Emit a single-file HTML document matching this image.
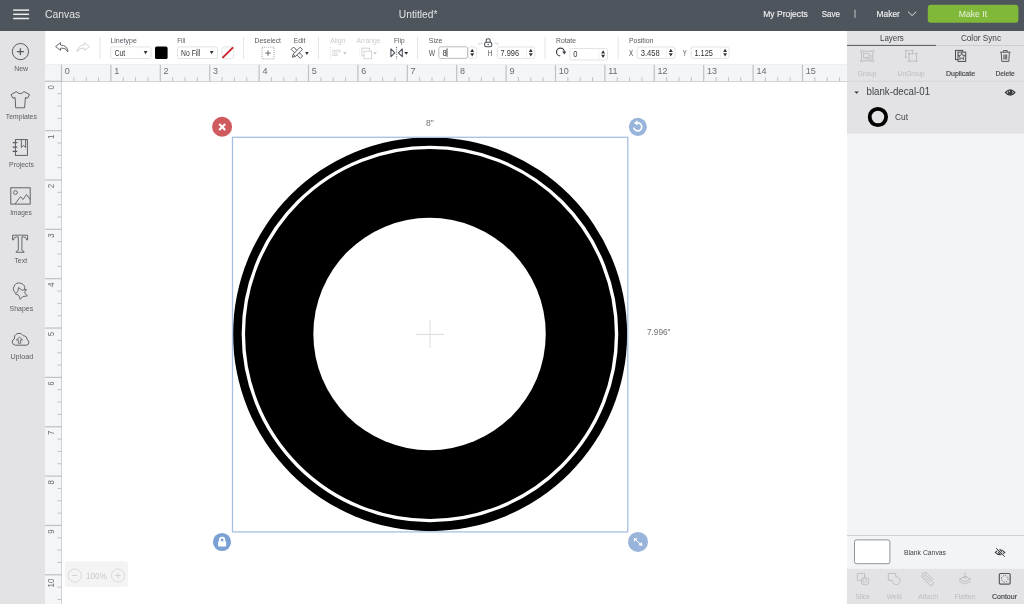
<!DOCTYPE html><html><head><meta charset="utf-8"><style>html,body{margin:0;padding:0;width:1024px;height:604px;overflow:hidden;background:#fff}svg{display:block;will-change:transform}text{font-family:"Liberation Sans", sans-serif}</style></head><body><svg width="1024" height="604" viewBox="0 0 1024 604"><rect x="0" y="0" width="1024" height="604" fill="#ffffff"/>
<rect x="0" y="0" width="1024" height="31" fill="#4f555c"/>
<rect x="0" y="31" width="45.3" height="574" fill="#e3e3e5"/>
<rect x="13.2" y="9.35" width="15.9" height="1.5" fill="#eceded"/>
<rect x="13.2" y="13.55" width="15.9" height="1.5" fill="#eceded"/>
<rect x="13.2" y="17.75" width="15.9" height="1.5" fill="#eceded"/>
<text x="45" y="18.2" font-size="11.4" fill="#e4e5e6" textLength="35.2" lengthAdjust="spacingAndGlyphs">Canvas</text>
<text x="398.8" y="17.8" font-size="11" fill="#e4e5e6" textLength="38.7" lengthAdjust="spacingAndGlyphs">Untitled*</text>
<text x="763.2" y="16.6" font-size="9" fill="#f0f0f0" stroke="#f0f0f0" stroke-width="0.14" textLength="44.6" lengthAdjust="spacingAndGlyphs">My Projects</text>
<text x="821.7" y="16.6" font-size="9" fill="#f0f0f0" stroke="#f0f0f0" stroke-width="0.14" textLength="18.4" lengthAdjust="spacingAndGlyphs">Save</text>
<rect x="854.3" y="9.7" width="1.4" height="8.2" fill="#a3a6aa"/>
<text x="876.6" y="16.6" font-size="9" fill="#f0f0f0" stroke="#f0f0f0" stroke-width="0.14" textLength="23.3" lengthAdjust="spacingAndGlyphs">Maker</text>
<polyline points="908,11.6 912.1,15.6 916.2,11.6" fill="none" stroke="#e0e1e2" stroke-width="1"/>
<rect x="927.8" y="4.8" width="90.6" height="18" rx="3" fill="#80b83a"/>
<text x="958.7" y="16.7" font-size="9" fill="#eaf3df" textLength="28.5" lengthAdjust="spacingAndGlyphs">Make It</text>
<circle cx="20.45" cy="51.6" r="8.1" fill="none" stroke="#575c62" stroke-width="1"/>
<path d="M16.9,51.7 H23.9 M20.4,48.3 V55.1" stroke="#575c62" stroke-width="1.3"/>
<text x="14.2" y="70.6" font-size="8.0" fill="#575c62" textLength="13.9" lengthAdjust="spacingAndGlyphs">New</text>
<path d="M16.3,91.6 Q18.4,93.7 20.3,93.6 Q22.3,93.7 24,91.6 L29.5,94.6 L27.5,98.2 L25.4,97.5 L24.6,107.8 L15.7,107.8 L15.1,97.5 L12.9,98.2 L11.1,94.6 Z" fill="none" stroke="#575c62" stroke-width="0.95" stroke-linejoin="round"/>
<text x="5.8" y="118.6" font-size="8.0" fill="#575c62" textLength="31" lengthAdjust="spacingAndGlyphs">Templates</text>
<rect x="15.4" y="139.6" width="12" height="15.8" fill="none" stroke="#575c62" stroke-width="0.95"/>
<path d="M21.4,139.6 V147.6 L23.5,145.3 L25.6,147.6 V139.6" fill="none" stroke="#575c62" stroke-width="0.9"/>
<path d="M12.7,142.7 H17.3 M12.7,147.1 H17.3 M12.7,151.3 H17.3" stroke="#575c62" stroke-width="1.2"/>
<text x="9.1" y="166.9" font-size="8.0" fill="#575c62" textLength="24.8" lengthAdjust="spacingAndGlyphs">Projects</text>
<rect x="10.8" y="187.8" width="19.4" height="16.3" fill="none" stroke="#575c62" stroke-width="0.95"/>
<circle cx="15.5" cy="192.6" r="1.9" fill="none" stroke="#575c62" stroke-width="0.9"/>
<polyline points="15,204 20.5,196.5 23,199.5 26.5,194.5 30.2,199.5" fill="none" stroke="#575c62" stroke-width="0.9"/>
<text x="10.3" y="215" font-size="8.0" fill="#575c62" textLength="21.5" lengthAdjust="spacingAndGlyphs">Images</text>
<path d="M12.6,235.2 H27.6 V240 H26.8 Q26.3,236.9 23.6,236.9 H21.9 V250 Q21.9,251.3 24,251.3 V252.3 H16.2 V251.3 Q18.3,251.3 18.3,250 V236.9 H16.6 Q13.9,236.9 13.4,240 H12.6 Z" fill="none" stroke="#575c62" stroke-width="0.9" stroke-linejoin="round"/>
<text x="14.3" y="263" font-size="8.0" fill="#575c62" textLength="12.8" lengthAdjust="spacingAndGlyphs">Text</text>
<path d="M15.9,293.2 A5.6,5.6 0 1 1 24.6,289.8" fill="none" stroke="#575c62" stroke-width="0.9"/>
<path d="M18.5,287.5 L21.9,290.2 L26.3,289.5 L24.5,292.8 L27.4,295.9 L22.8,296.6 L20.3,299.4 L18.8,295.3 L15.4,293.9 L17.9,291.2 Z" fill="none" stroke="#575c62" stroke-width="0.9" stroke-linejoin="round"/>
<text x="9.6" y="311" font-size="8.0" fill="#575c62" textLength="23.6" lengthAdjust="spacingAndGlyphs">Shapes</text>
<path d="M15.3,345.2 A3.3,3.3 0 0 1 14.5,338.8 A4.7,4.7 0 0 1 23.3,335.8 A3.4,3.4 0 0 1 27,339.6 A2.9,2.9 0 0 1 26.4,345.2 Z" fill="none" stroke="#575c62" stroke-width="0.95" stroke-linejoin="round"/>
<path d="M19.5,337.2 L16.4,339.9 H18.3 V343.2 H20.7 V339.9 H22.6 Z" fill="none" stroke="#575c62" stroke-width="0.85" stroke-linejoin="round"/>
<text x="10.4" y="359" font-size="8.0" fill="#575c62" textLength="22.8" lengthAdjust="spacingAndGlyphs">Upload</text>
<rect x="99.5" y="37" width="1" height="22" fill="#e6e6e6"/>
<rect x="243.0" y="37" width="1" height="22" fill="#e6e6e6"/>
<rect x="318.0" y="37" width="1" height="22" fill="#e6e6e6"/>
<rect x="417.0" y="37" width="1" height="22" fill="#e6e6e6"/>
<rect x="544.5" y="37" width="1" height="22" fill="#e6e6e6"/>
<rect x="617.7" y="37" width="1" height="22" fill="#e6e6e6"/>
<path d="M60.5,42.6 L55.6,46.6 L60.5,50.4 V48.2 Q65.8,47.6 67.9,52 Q67.6,45.3 60.5,45 Z" fill="none" stroke="#5a5f65" stroke-width="0.95" stroke-linejoin="round"/>
<path d="M84.5,42.6 L89.4,46.6 L84.5,50.4 V48.2 Q79.2,47.6 77.1,52 Q77.4,45.3 84.5,45 Z" fill="none" stroke="#d0d2d4" stroke-width="0.95" stroke-linejoin="round"/>
<text x="110.4" y="42.7" font-size="7.9" fill="#555a60" textLength="26.4" lengthAdjust="spacingAndGlyphs">Linetype</text>
<text x="177.2" y="42.7" font-size="7.9" fill="#555a60" textLength="8" lengthAdjust="spacingAndGlyphs">Fill</text>
<text x="254.6" y="42.7" font-size="7.9" fill="#555a60" textLength="26.4" lengthAdjust="spacingAndGlyphs">Deselect</text>
<text x="293.7" y="42.7" font-size="7.9" fill="#555a60" textLength="11.7" lengthAdjust="spacingAndGlyphs">Edit</text>
<text x="330.2" y="42.7" font-size="7.9" fill="#c9cbcd" textLength="15.3" lengthAdjust="spacingAndGlyphs">Align</text>
<text x="356.6" y="42.7" font-size="7.9" fill="#c9cbcd" textLength="24" lengthAdjust="spacingAndGlyphs">Arrange</text>
<text x="394" y="42.7" font-size="7.9" fill="#555a60" textLength="10.6" lengthAdjust="spacingAndGlyphs">Flip</text>
<text x="428.8" y="42.7" font-size="7.9" fill="#555a60" textLength="13.7" lengthAdjust="spacingAndGlyphs">Size</text>
<text x="556" y="42.7" font-size="7.9" fill="#555a60" textLength="20" lengthAdjust="spacingAndGlyphs">Rotate</text>
<text x="629" y="42.7" font-size="7.9" fill="#555a60" textLength="24.4" lengthAdjust="spacingAndGlyphs">Position</text>
<rect x="110.7" y="46.9" width="40.4" height="11.6" rx="2" fill="#fff" stroke="#e3e3e3" stroke-width="1"/>
<text x="114.7" y="55.7" font-size="8.2" fill="#333" textLength="10.4" lengthAdjust="spacingAndGlyphs">Cut</text>
<path d="M143.7,50.95 H147.5 L145.6,54.25 Z" fill="#333"/>
<rect x="155" y="46.6" width="12.6" height="12.4" rx="1.6" fill="#000"/>
<rect x="177.5" y="46.9" width="40" height="11.6" rx="2" fill="#fff" stroke="#e3e3e3" stroke-width="1"/>
<text x="181.1" y="55.7" font-size="8.2" fill="#333" textLength="19.2" lengthAdjust="spacingAndGlyphs">No Fill</text>
<path d="M209.79999999999998,50.95 H213.6 L211.7,54.25 Z" fill="#333"/>
<rect x="222.1" y="46.9" width="11.6" height="11.8" rx="2" fill="#fff" stroke="#e3e3e3" stroke-width="1"/>
<line x1="223" y1="57.4" x2="232.6" y2="47.8" stroke="#c9232b" stroke-width="1.9" stroke-linecap="round"/>
<rect x="262" y="47.2" width="12" height="11.8" fill="none" stroke="#8a8e92" stroke-width="0.8" stroke-dasharray="1,1.1"/>
<path d="M265.3,53.1 H270.7 M268,50.4 V55.8" stroke="#555" stroke-width="0.85"/>
<g transform="translate(296.9,52.7) rotate(45) scale(0.84)"><rect x="-7.6" y="-2" width="15.2" height="4" fill="#fff" stroke="#50555b" stroke-width="1.05"/><path d="M-4,-2 V-0.6 M-1.5,-2 V-0.6 M1,-2 V-0.6 M3.5,-2 V-0.6" stroke="#50555b" stroke-width="0.7"/></g>
<g transform="translate(296.9,52.7) rotate(-45) scale(0.84)"><path d="M-7.6,0 L-4.4,-1.9 H7.4 V1.9 H-4.4 Z M-4.4,-1.9 V1.9" fill="#fff" stroke="#50555b" stroke-width="1.05" stroke-linejoin="round"/></g>
<path d="M305.09999999999997,51.9 H308.7 L306.9,54.9 Z" fill="#333"/>
<path d="M330.4,47 V59" stroke="#c9cbcd" stroke-width="0.8" stroke-dasharray="0.9,1.6"/>
<rect x="332.3" y="50.2" width="8.4" height="1.7" rx="0.8" fill="none" stroke="#cfd1d3" stroke-width="0.8"/><rect x="332.3" y="53.8" width="5.4" height="1.7" rx="0.8" fill="none" stroke="#cfd1d3" stroke-width="0.8"/>
<path d="M343.0,51.949999999999996 H346.79999999999995 L344.9,54.65 Z" fill="#c9cbcd"/>
<path d="M359.6,56.5 V49.5 Q359.6,47 362,47 H367" fill="none" stroke="#dfe0e2" stroke-width="0.7" stroke-dasharray="0.9,1"/>
<rect x="361.9" y="48.2" width="7.8" height="7.6" fill="#fff" stroke="#cfd1d3" stroke-width="0.9"/><rect x="364.1" y="51.2" width="7.5" height="7.5" fill="#fff" stroke="#cfd1d3" stroke-width="0.9"/>
<path d="M373.1,51.949999999999996 H376.9 L375,54.65 Z" fill="#c9cbcd"/>
<path d="M390.9,48.9 V56.7 L394.8,52.8 Z M402.3,48.9 V56.7 L398.4,52.8 Z" fill="none" stroke="#4a4f55" stroke-width="1.05" stroke-linejoin="round"/>
<path d="M396.6,47 V59.2" stroke="#4a4f55" stroke-width="0.9" stroke-dasharray="1,1.3"/>
<path d="M404.25,51.9 H408.15 L406.2,54.699999999999996 Z" fill="#333"/>
<text x="428.8" y="55.7" font-size="8.2" fill="#555a60" textLength="6.4" lengthAdjust="spacingAndGlyphs">W</text>
<rect x="468.1" y="47.0" width="8.6" height="11.4" rx="2" fill="#fff" stroke="#e6e6e6" stroke-width="1"/>
<rect x="438.8" y="46.8" width="28.8" height="11.6" rx="2" fill="#fff" stroke="#b9bcbf" stroke-width="1"/>
<text x="442.5" y="55.7" font-size="8.2" fill="#333" textLength="4.2" lengthAdjust="spacingAndGlyphs">8</text>
<rect x="446.6" y="48.4" width="0.8" height="8.4" fill="#222"/>
<path d="M470.25,51.900000000000006 L472.2,48.800000000000004 L474.15,51.900000000000006 Z M470.25,53.300000000000004 L472.2,56.6 L474.15,53.300000000000004 Z" fill="#333"/>
<path d="M478.6,45.5 V43.3 H482.5 M494.4,43.3 H497.8 V45.5" fill="none" stroke="#d3d5d7" stroke-width="0.9"/>
<rect x="484.6" y="42.2" width="7.2" height="4.6" rx="1.8" fill="none" stroke="#4a4f55" stroke-width="1.05"/>
<path d="M486.2,42.4 V40.6 Q486.2,38.7 488.2,38.7 Q490.2,38.7 490.2,40.6 V42.4" fill="none" stroke="#4a4f55" stroke-width="1.05"/>
<circle cx="488.2" cy="44.4" r="0.75" fill="#4a4f55"/>
<text x="487.8" y="55.7" font-size="8.2" fill="#555a60" textLength="4.8" lengthAdjust="spacingAndGlyphs">H</text>
<rect x="497.4" y="47.0" width="37.4" height="11.4" rx="2" fill="#fff" stroke="#e3e3e3" stroke-width="1"/>
<rect x="526.2" y="47" width="0.8" height="11.5" fill="#eeeeee"/>
<text x="500.5" y="55.7" font-size="8.2" fill="#333" textLength="18.5" lengthAdjust="spacingAndGlyphs">7.996</text>
<path d="M528.8499999999999,51.900000000000006 L530.8,48.800000000000004 L532.75,51.900000000000006 Z M528.8499999999999,53.300000000000004 L530.8,56.6 L532.75,53.300000000000004 Z" fill="#333"/>
<path d="M560.2,55.9 A3.9,3.9 0 1 1 564.3,52" fill="none" stroke="#3e4349" stroke-width="1.2"/>
<path d="M562.2,51.6 L566.4,51.6 L564.3,54.4 Z" fill="#3e4349"/>
<rect x="569.8" y="48.5" width="37.7" height="11.5" rx="2" fill="#fff" stroke="#e3e3e3" stroke-width="1"/>
<rect x="598.5" y="48.5" width="0.8" height="11.5" fill="#eeeeee"/>
<text x="573.3" y="57.1" font-size="8.2" fill="#333" textLength="4.2" lengthAdjust="spacingAndGlyphs">0</text>
<path d="M601.15,53.400000000000006 L603.1,50.300000000000004 L605.0500000000001,53.400000000000006 Z M601.15,54.800000000000004 L603.1,58.1 L605.0500000000001,54.800000000000004 Z" fill="#333"/>
<text x="629" y="55.7" font-size="8.2" fill="#555a60" textLength="4.2" lengthAdjust="spacingAndGlyphs">X</text>
<rect x="637.2" y="47.0" width="37.9" height="11.4" rx="2" fill="#fff" stroke="#e3e3e3" stroke-width="1"/>
<rect x="666" y="47" width="0.8" height="11.5" fill="#eeeeee"/>
<text x="640.7" y="55.7" font-size="8.2" fill="#333" textLength="19.1" lengthAdjust="spacingAndGlyphs">3.458</text>
<path d="M668.8499999999999,51.900000000000006 L670.8,48.800000000000004 L672.75,51.900000000000006 Z M668.8499999999999,53.300000000000004 L670.8,56.6 L672.75,53.300000000000004 Z" fill="#333"/>
<text x="682.7" y="55.7" font-size="8.2" fill="#555a60" textLength="4" lengthAdjust="spacingAndGlyphs">Y</text>
<rect x="691.1" y="47.0" width="38" height="11.4" rx="2" fill="#fff" stroke="#e3e3e3" stroke-width="1"/>
<rect x="720" y="47" width="0.8" height="11.5" fill="#eeeeee"/>
<text x="694.4" y="55.7" font-size="8.2" fill="#333" textLength="18.6" lengthAdjust="spacingAndGlyphs">1.125</text>
<path d="M723.15,51.900000000000006 L725.1,48.800000000000004 L727.0500000000001,51.900000000000006 Z M723.15,53.300000000000004 L725.1,56.6 L727.0500000000001,53.300000000000004 Z" fill="#333"/>
<rect x="45" y="64" width="802" height="17" fill="#f4f5f7"/>
<rect x="45" y="64" width="16.5" height="540" fill="#f4f5f7"/>
<rect x="45" y="64" width="802" height="1" fill="#eeeff1"/>
<rect x="45" y="81" width="802" height="1" fill="#d3d4d7"/>
<rect x="61" y="64.5" width="1" height="540" fill="#d3d4d7"/>
<rect x="60.9" y="64.9" width="1.2" height="16.6" fill="#bfc1c4"/>
<text x="64.8" y="74.2" font-size="9" fill="#686c71">0</text>
<rect x="73.35" y="77.2" width="1" height="4" fill="#bfc1c4"/>
<rect x="85.7" y="77.2" width="1" height="4" fill="#bfc1c4"/>
<rect x="98.05" y="77.2" width="1" height="4" fill="#bfc1c4"/>
<rect x="110.30000000000001" y="64.9" width="1.2" height="16.6" fill="#bfc1c4"/>
<text x="114.2" y="74.2" font-size="9" fill="#686c71">1</text>
<rect x="122.75" y="77.2" width="1" height="4" fill="#bfc1c4"/>
<rect x="135.1" y="77.2" width="1" height="4" fill="#bfc1c4"/>
<rect x="147.45" y="77.2" width="1" height="4" fill="#bfc1c4"/>
<rect x="159.70000000000002" y="64.9" width="1.2" height="16.6" fill="#bfc1c4"/>
<text x="163.6" y="74.2" font-size="9" fill="#686c71">2</text>
<rect x="172.15" y="77.2" width="1" height="4" fill="#bfc1c4"/>
<rect x="184.5" y="77.2" width="1" height="4" fill="#bfc1c4"/>
<rect x="196.85000000000002" y="77.2" width="1" height="4" fill="#bfc1c4"/>
<rect x="209.1" y="64.9" width="1.2" height="16.6" fill="#bfc1c4"/>
<text x="213.0" y="74.2" font-size="9" fill="#686c71">3</text>
<rect x="221.54999999999998" y="77.2" width="1" height="4" fill="#bfc1c4"/>
<rect x="233.89999999999998" y="77.2" width="1" height="4" fill="#bfc1c4"/>
<rect x="246.25" y="77.2" width="1" height="4" fill="#bfc1c4"/>
<rect x="258.5" y="64.9" width="1.2" height="16.6" fill="#bfc1c4"/>
<text x="262.4" y="74.2" font-size="9" fill="#686c71">4</text>
<rect x="270.95000000000005" y="77.2" width="1" height="4" fill="#bfc1c4"/>
<rect x="283.3" y="77.2" width="1" height="4" fill="#bfc1c4"/>
<rect x="295.65000000000003" y="77.2" width="1" height="4" fill="#bfc1c4"/>
<rect x="307.9" y="64.9" width="1.2" height="16.6" fill="#bfc1c4"/>
<text x="311.8" y="74.2" font-size="9" fill="#686c71">5</text>
<rect x="320.35" y="77.2" width="1" height="4" fill="#bfc1c4"/>
<rect x="332.7" y="77.2" width="1" height="4" fill="#bfc1c4"/>
<rect x="345.05" y="77.2" width="1" height="4" fill="#bfc1c4"/>
<rect x="357.29999999999995" y="64.9" width="1.2" height="16.6" fill="#bfc1c4"/>
<text x="361.2" y="74.2" font-size="9" fill="#686c71">6</text>
<rect x="369.75" y="77.2" width="1" height="4" fill="#bfc1c4"/>
<rect x="382.09999999999997" y="77.2" width="1" height="4" fill="#bfc1c4"/>
<rect x="394.45" y="77.2" width="1" height="4" fill="#bfc1c4"/>
<rect x="406.7" y="64.9" width="1.2" height="16.6" fill="#bfc1c4"/>
<text x="410.6" y="74.2" font-size="9" fill="#686c71">7</text>
<rect x="419.15000000000003" y="77.2" width="1" height="4" fill="#bfc1c4"/>
<rect x="431.5" y="77.2" width="1" height="4" fill="#bfc1c4"/>
<rect x="443.85" y="77.2" width="1" height="4" fill="#bfc1c4"/>
<rect x="456.09999999999997" y="64.9" width="1.2" height="16.6" fill="#bfc1c4"/>
<text x="460.0" y="74.2" font-size="9" fill="#686c71">8</text>
<rect x="468.55" y="77.2" width="1" height="4" fill="#bfc1c4"/>
<rect x="480.9" y="77.2" width="1" height="4" fill="#bfc1c4"/>
<rect x="493.25" y="77.2" width="1" height="4" fill="#bfc1c4"/>
<rect x="505.49999999999994" y="64.9" width="1.2" height="16.6" fill="#bfc1c4"/>
<text x="509.4" y="74.2" font-size="9" fill="#686c71">9</text>
<rect x="517.9499999999999" y="77.2" width="1" height="4" fill="#bfc1c4"/>
<rect x="530.3" y="77.2" width="1" height="4" fill="#bfc1c4"/>
<rect x="542.65" y="77.2" width="1" height="4" fill="#bfc1c4"/>
<rect x="554.9" y="64.9" width="1.2" height="16.6" fill="#bfc1c4"/>
<text x="558.8" y="74.2" font-size="9" fill="#686c71">10</text>
<rect x="567.35" y="77.2" width="1" height="4" fill="#bfc1c4"/>
<rect x="579.7" y="77.2" width="1" height="4" fill="#bfc1c4"/>
<rect x="592.05" y="77.2" width="1" height="4" fill="#bfc1c4"/>
<rect x="604.3" y="64.9" width="1.2" height="16.6" fill="#bfc1c4"/>
<text x="608.2" y="74.2" font-size="9" fill="#686c71">11</text>
<rect x="616.75" y="77.2" width="1" height="4" fill="#bfc1c4"/>
<rect x="629.1" y="77.2" width="1" height="4" fill="#bfc1c4"/>
<rect x="641.4499999999999" y="77.2" width="1" height="4" fill="#bfc1c4"/>
<rect x="653.6999999999999" y="64.9" width="1.2" height="16.6" fill="#bfc1c4"/>
<text x="657.6" y="74.2" font-size="9" fill="#686c71">12</text>
<rect x="666.15" y="77.2" width="1" height="4" fill="#bfc1c4"/>
<rect x="678.5" y="77.2" width="1" height="4" fill="#bfc1c4"/>
<rect x="690.8499999999999" y="77.2" width="1" height="4" fill="#bfc1c4"/>
<rect x="703.0999999999999" y="64.9" width="1.2" height="16.6" fill="#bfc1c4"/>
<text x="707.0" y="74.2" font-size="9" fill="#686c71">13</text>
<rect x="715.55" y="77.2" width="1" height="4" fill="#bfc1c4"/>
<rect x="727.9" y="77.2" width="1" height="4" fill="#bfc1c4"/>
<rect x="740.2499999999999" y="77.2" width="1" height="4" fill="#bfc1c4"/>
<rect x="752.5" y="64.9" width="1.2" height="16.6" fill="#bfc1c4"/>
<text x="756.4" y="74.2" font-size="9" fill="#686c71">14</text>
<rect x="764.95" y="77.2" width="1" height="4" fill="#bfc1c4"/>
<rect x="777.3000000000001" y="77.2" width="1" height="4" fill="#bfc1c4"/>
<rect x="789.65" y="77.2" width="1" height="4" fill="#bfc1c4"/>
<rect x="801.9" y="64.9" width="1.2" height="16.6" fill="#bfc1c4"/>
<text x="805.8" y="74.2" font-size="9" fill="#686c71">15</text>
<rect x="814.35" y="77.2" width="1" height="4" fill="#bfc1c4"/>
<rect x="826.7" y="77.2" width="1" height="4" fill="#bfc1c4"/>
<rect x="839.05" y="77.2" width="1" height="4" fill="#bfc1c4"/>
<rect x="45" y="80.7" width="17" height="1.2" fill="#bfc1c4"/>
<text x="0" y="0" font-size="9.2" fill="#686c71" text-anchor="end" textLength="4.4" lengthAdjust="spacingAndGlyphs" transform="translate(54,85.2) rotate(-90)">0</text>
<rect x="57.5" y="93.1375" width="4" height="1" fill="#bfc1c4"/>
<rect x="57.5" y="105.475" width="4" height="1" fill="#bfc1c4"/>
<rect x="57.5" y="117.8125" width="4" height="1" fill="#bfc1c4"/>
<rect x="45" y="130.05" width="17" height="1.2" fill="#bfc1c4"/>
<text x="0" y="0" font-size="9.2" fill="#686c71" text-anchor="end" textLength="4.4" lengthAdjust="spacingAndGlyphs" transform="translate(54,134.55) rotate(-90)">1</text>
<rect x="57.5" y="142.4875" width="4" height="1" fill="#bfc1c4"/>
<rect x="57.5" y="154.82500000000002" width="4" height="1" fill="#bfc1c4"/>
<rect x="57.5" y="167.16250000000002" width="4" height="1" fill="#bfc1c4"/>
<rect x="45" y="179.4" width="17" height="1.2" fill="#bfc1c4"/>
<text x="0" y="0" font-size="9.2" fill="#686c71" text-anchor="end" textLength="4.4" lengthAdjust="spacingAndGlyphs" transform="translate(54,183.9) rotate(-90)">2</text>
<rect x="57.5" y="191.8375" width="4" height="1" fill="#bfc1c4"/>
<rect x="57.5" y="204.175" width="4" height="1" fill="#bfc1c4"/>
<rect x="57.5" y="216.5125" width="4" height="1" fill="#bfc1c4"/>
<rect x="45" y="228.75000000000003" width="17" height="1.2" fill="#bfc1c4"/>
<text x="0" y="0" font-size="9.2" fill="#686c71" text-anchor="end" textLength="4.4" lengthAdjust="spacingAndGlyphs" transform="translate(54,233.25) rotate(-90)">3</text>
<rect x="57.5" y="241.18750000000003" width="4" height="1" fill="#bfc1c4"/>
<rect x="57.5" y="253.52500000000003" width="4" height="1" fill="#bfc1c4"/>
<rect x="57.5" y="265.8625" width="4" height="1" fill="#bfc1c4"/>
<rect x="45" y="278.09999999999997" width="17" height="1.2" fill="#bfc1c4"/>
<text x="0" y="0" font-size="9.2" fill="#686c71" text-anchor="end" textLength="4.4" lengthAdjust="spacingAndGlyphs" transform="translate(54,282.6) rotate(-90)">4</text>
<rect x="57.5" y="290.53749999999997" width="4" height="1" fill="#bfc1c4"/>
<rect x="57.5" y="302.875" width="4" height="1" fill="#bfc1c4"/>
<rect x="57.5" y="315.2125" width="4" height="1" fill="#bfc1c4"/>
<rect x="45" y="327.45" width="17" height="1.2" fill="#bfc1c4"/>
<text x="0" y="0" font-size="9.2" fill="#686c71" text-anchor="end" textLength="4.4" lengthAdjust="spacingAndGlyphs" transform="translate(54,331.95) rotate(-90)">5</text>
<rect x="57.5" y="339.8875" width="4" height="1" fill="#bfc1c4"/>
<rect x="57.5" y="352.225" width="4" height="1" fill="#bfc1c4"/>
<rect x="57.5" y="364.5625" width="4" height="1" fill="#bfc1c4"/>
<rect x="45" y="376.8" width="17" height="1.2" fill="#bfc1c4"/>
<text x="0" y="0" font-size="9.2" fill="#686c71" text-anchor="end" textLength="4.4" lengthAdjust="spacingAndGlyphs" transform="translate(54,381.3) rotate(-90)">6</text>
<rect x="57.5" y="389.2375" width="4" height="1" fill="#bfc1c4"/>
<rect x="57.5" y="401.57500000000005" width="4" height="1" fill="#bfc1c4"/>
<rect x="57.5" y="413.9125" width="4" height="1" fill="#bfc1c4"/>
<rect x="45" y="426.15" width="17" height="1.2" fill="#bfc1c4"/>
<text x="0" y="0" font-size="9.2" fill="#686c71" text-anchor="end" textLength="4.4" lengthAdjust="spacingAndGlyphs" transform="translate(54,430.65) rotate(-90)">7</text>
<rect x="57.5" y="438.5875" width="4" height="1" fill="#bfc1c4"/>
<rect x="57.5" y="450.925" width="4" height="1" fill="#bfc1c4"/>
<rect x="57.5" y="463.2625" width="4" height="1" fill="#bfc1c4"/>
<rect x="45" y="475.5" width="17" height="1.2" fill="#bfc1c4"/>
<text x="0" y="0" font-size="9.2" fill="#686c71" text-anchor="end" textLength="4.4" lengthAdjust="spacingAndGlyphs" transform="translate(54,480.0) rotate(-90)">8</text>
<rect x="57.5" y="487.9375" width="4" height="1" fill="#bfc1c4"/>
<rect x="57.5" y="500.27500000000003" width="4" height="1" fill="#bfc1c4"/>
<rect x="57.5" y="512.6125000000001" width="4" height="1" fill="#bfc1c4"/>
<rect x="45" y="524.85" width="17" height="1.2" fill="#bfc1c4"/>
<text x="0" y="0" font-size="9.2" fill="#686c71" text-anchor="end" textLength="4.4" lengthAdjust="spacingAndGlyphs" transform="translate(54,529.35) rotate(-90)">9</text>
<rect x="57.5" y="537.2875" width="4" height="1" fill="#bfc1c4"/>
<rect x="57.5" y="549.625" width="4" height="1" fill="#bfc1c4"/>
<rect x="57.5" y="561.9625000000001" width="4" height="1" fill="#bfc1c4"/>
<rect x="45" y="574.1999999999999" width="17" height="1.2" fill="#bfc1c4"/>
<text x="0" y="0" font-size="9.2" fill="#686c71" text-anchor="end" textLength="8.8" lengthAdjust="spacingAndGlyphs" transform="translate(54,578.7) rotate(-90)">10</text>
<rect x="57.5" y="586.6374999999999" width="4" height="1" fill="#bfc1c4"/>
<rect x="57.5" y="598.9749999999999" width="4" height="1" fill="#bfc1c4"/>
<rect x="57.5" y="611.3125" width="4" height="1" fill="#bfc1c4"/>
<circle cx="430.1" cy="334.15" r="197" fill="#000"/>
<circle cx="429.95" cy="334" r="186.6" fill="none" stroke="#fff" stroke-width="3.4"/>
<circle cx="429.55" cy="334" r="116.2" fill="#fff"/>
<path d="M416,334.4 H444 M430,320.5 V348" stroke="#dcdcdc" stroke-width="1"/>
<rect x="232.5" y="137.3" width="395.3" height="394.6" fill="none" stroke="#a7bfe2" stroke-width="1.3"/>
<circle cx="222.1" cy="126.8" r="10" fill="#d05b5f"/>
<path d="M219.2,123.9 L225.2,129.9 M225.2,123.9 L219.2,129.9" stroke="#fff" stroke-width="2.1"/>
<circle cx="637.85" cy="126.85" r="9.05" fill="#98b4da"/>
<path d="M633.8,127.6 A4,4 0 1 0 637.6,122.9" fill="none" stroke="#fff" stroke-width="1.7"/>
<path d="M637.6,120.3 L633.9,122.9 L637.6,125.5 Z" fill="#fff"/>
<circle cx="222" cy="542" r="9.05" fill="#7ba0d3"/>
<rect x="218.1" y="541.3" width="8" height="5.1" rx="0.5" fill="#fff"/>
<path d="M219.9,541.6 V539.6 Q219.9,537.6 222.1,537.6 Q224.3,537.6 224.3,539.6 V541.6" fill="none" stroke="#fff" stroke-width="1.9"/>
<circle cx="638" cy="541.9" r="10" fill="#98b4da"/>
<path d="M635.5,539.5 L640.5,544.5" stroke="#fff" stroke-width="1"/>
<path d="M633.6,538 L637.6,538.6 L635.8,540.2 L634.2,541.8 Z M642.4,545.8 L638.4,545.2 L640.2,543.6 L641.8,542 Z" fill="#fff"/>
<text x="426.1" y="126.2" font-size="8.5" fill="#6d6f72" textLength="7.8" lengthAdjust="spacingAndGlyphs">8&quot;</text>
<text x="647" y="334.8" font-size="9" fill="#6d6f72" textLength="23.5" lengthAdjust="spacingAndGlyphs">7.996&quot;</text>
<rect x="64.7" y="561.3" width="63.3" height="25.7" rx="3" fill="#f4f4f4"/>
<circle cx="74.8" cy="575.5" r="6.6" fill="none" stroke="#d6d6d6" stroke-width="0.9"/>
<path d="M72,575.5 H77.6" stroke="#d0d0d0" stroke-width="0.9"/>
<text x="86" y="579.4" font-size="8.5" fill="#cbcbcb" textLength="20.9" lengthAdjust="spacingAndGlyphs">100%</text>
<circle cx="118" cy="575.5" r="6.6" fill="none" stroke="#d6d6d6" stroke-width="0.9"/>
<path d="M115.2,575.5 H120.8 M118,572.7 V578.3" stroke="#d0d0d0" stroke-width="0.9"/>
<rect x="847" y="31" width="177" height="574" fill="#f3f4f6"/>
<rect x="847" y="31" width="177" height="50" fill="#e3e3e5"/>
<rect x="847" y="44.9" width="89.3" height="1.1" fill="#5f656c"/>
<rect x="936.3" y="45" width="87.7" height="1" fill="#cdced1"/>
<text x="880" y="40.8" font-size="9.6" fill="#3f4449" textLength="23.8" lengthAdjust="spacingAndGlyphs">Layers</text>
<text x="960.9" y="40.8" font-size="9.6" fill="#3f4449" textLength="40.1" lengthAdjust="spacingAndGlyphs">Color Sync</text>
<rect x="861.5" y="51.2" width="11.3" height="9.6" fill="none" stroke="#b9bbbe" stroke-width="0.9"/>
<circle cx="861.5" cy="51.2" r="1.25" fill="#e3e3e5" stroke="#b9bbbe" stroke-width="0.8"/>
<circle cx="872.8" cy="51.2" r="1.25" fill="#e3e3e5" stroke="#b9bbbe" stroke-width="0.8"/>
<circle cx="861.5" cy="60.8" r="1.25" fill="#e3e3e5" stroke="#b9bbbe" stroke-width="0.8"/>
<circle cx="872.8" cy="60.8" r="1.25" fill="#e3e3e5" stroke="#b9bbbe" stroke-width="0.8"/>
<rect x="863.4" y="53.5" width="5.4" height="4.2" fill="none" stroke="#b9bbbe" stroke-width="0.8"/><path d="M869.8,55.2 H870.9 V59 H865.4 V58.4" fill="none" stroke="#b9bbbe" stroke-width="0.8"/>
<text x="857.7" y="75.8" font-size="7.4" fill="#b9bbbe" textLength="18.8" lengthAdjust="spacingAndGlyphs">Group</text>
<path d="M905.8,57.2 V50.6 H912.6 V53.8" fill="none" stroke="#b9bbbe" stroke-width="0.85"/><rect x="909" y="53.8" width="7.6" height="7.3" fill="none" stroke="#b9bbbe" stroke-width="0.85"/>
<circle cx="905.8" cy="50.6" r="0.95" fill="#b9bbbe"/>
<circle cx="912.6" cy="50.6" r="0.95" fill="#b9bbbe"/>
<circle cx="905.8" cy="57.2" r="0.95" fill="#b9bbbe"/>
<circle cx="909" cy="53.8" r="0.95" fill="#b9bbbe"/>
<circle cx="916.6" cy="53.8" r="0.95" fill="#b9bbbe"/>
<circle cx="909" cy="61.1" r="0.95" fill="#b9bbbe"/>
<circle cx="916.6" cy="61.1" r="0.95" fill="#b9bbbe"/>
<text x="897.6" y="75.8" font-size="7.4" fill="#b9bbbe" textLength="27.2" lengthAdjust="spacingAndGlyphs">UnGroup</text>
<rect x="955.5" y="50.4" width="7.2" height="9.2" fill="none" stroke="#474b51" stroke-width="1"/><rect x="958" y="52.1" width="7.7" height="9.3" fill="#e3e3e5" stroke="#474b51" stroke-width="1"/>
<path d="M961.70,53.00 L962.64,55.31 L965.12,55.49 L963.22,57.09 L963.82,59.51 L961.70,58.20 L959.58,59.51 L960.18,57.09 L958.28,55.49 L960.76,55.31 Z" fill="none" stroke="#474b51" stroke-width="0.85" stroke-linejoin="round"/>
<text x="946" y="75.8" font-size="7.4" fill="#3a3f45" stroke="#3a3f45" stroke-width="0.14" textLength="29" lengthAdjust="spacingAndGlyphs">Duplicate</text>
<path d="M1000,52.2 H1010.6 M1003.4,52 V50.6 H1007.2 V52 M1001.2,52.4 L1001.8,61.4 H1008.8 L1009.4,52.4 M1003.9,54.5 V59.5 M1005.3,54.5 V59.5 M1006.7,54.5 V59.5" fill="none" stroke="#474b51" stroke-width="0.9"/>
<text x="995.5" y="75.8" font-size="7.4" fill="#3a3f45" stroke="#3a3f45" stroke-width="0.14" textLength="19.3" lengthAdjust="spacingAndGlyphs">Delete</text>
<rect x="847" y="80.8" width="177" height="1" fill="#cfd0d3"/>
<rect x="847" y="81.8" width="177" height="51.8" fill="#e3e3e5"/>
<path d="M854.3000000000001,91.39999999999999 H858.9 L856.6,93.8 Z" fill="#333"/>
<text x="866.5" y="95.3" font-size="10" fill="#3f4449" textLength="63.6" lengthAdjust="spacingAndGlyphs">blank-decal-01</text>
<path d="M1005.5,92.5 Q1010.2,87.3 1014.9,92.5 Q1010.2,97.7 1005.5,92.5 Z" fill="none" stroke="#35393e" stroke-width="1.15"/>
<circle cx="1010.2" cy="92.4" r="2.4" fill="#35393e"/><circle cx="1009.4" cy="91.6" r="0.7" fill="#e3e3e5"/>
<circle cx="877.9" cy="117" r="8.2" fill="none" stroke="#000" stroke-width="3.8"/>
<text x="895" y="120.3" font-size="9" fill="#3f4449" textLength="13" lengthAdjust="spacingAndGlyphs">Cut</text>
<rect x="847" y="535" width="177" height="1" fill="#cfd0d3"/>
<rect x="854.5" y="539.9" width="35.4" height="23.8" rx="2" fill="#fff" stroke="#909498" stroke-width="1"/>
<text x="904" y="554.8" font-size="7.4" fill="#3a3f45" textLength="42" lengthAdjust="spacingAndGlyphs">Blank Canvas</text>
<path d="M995.3,552.3 Q1000,547.3 1004.8,552.3 Q1000,557.3 995.3,552.3 Z" fill="none" stroke="#3a3e43" stroke-width="1.1"/>
<circle cx="1000.1" cy="552.2" r="2.1" fill="#3a3e43"/>
<path d="M996.2,548.2 L1004.8,556.7" stroke="#f3f4f6" stroke-width="1.8"/><path d="M996.2,548.2 L1004.8,556.7" stroke="#3a3e43" stroke-width="1"/>
<rect x="847" y="568.8" width="177" height="35.2" fill="#e3e3e5"/>
<path d="M861.3,580.3 H857.3 V573.4 H864.5 V577.2" fill="none" stroke="#b9bbbe" stroke-width="0.9"/>
<circle cx="865" cy="581.1" r="3.9" fill="none" stroke="#b9bbbe" stroke-width="0.9"/><circle cx="864.6" cy="580.6" r="2" fill="none" stroke="#b9bbbe" stroke-width="0.8"/>
<text x="855.4" y="598.7" font-size="7.4" fill="#b9bbbe" textLength="14.6" lengthAdjust="spacingAndGlyphs">Slice</text>
<path d="M892.3,580.3 H888.3 V573.4 H895.7 V576.8 A3.9,3.9 0 1 1 892.3,580.3 Z" fill="none" stroke="#b9bbbe" stroke-width="0.9" stroke-linejoin="round"/>
<text x="886.7" y="598.7" font-size="7.4" fill="#b9bbbe" textLength="14.9" lengthAdjust="spacingAndGlyphs">Weld</text>
<g transform="translate(928.4,579) rotate(-45)"><path d="M-1.2,3.2 V-4.3 A1.1,1.1 0 0 1 1,-4.3 V5 A2.1,2.1 0 0 1 -3.2,5 V-4.6 A3.1,3.1 0 0 1 3,-4.6 V3.6" fill="none" stroke="#b9bbbe" stroke-width="0.9" stroke-linecap="round"/></g>
<text x="918.3" y="598.7" font-size="7.4" fill="#b9bbbe" textLength="19.7" lengthAdjust="spacingAndGlyphs">Attach</text>
<path d="M959.3,579 L965,576.3 L970.7,579 L965,581.7 Z M959.3,581.4 L965,584.1 L970.7,581.4" fill="none" stroke="#b9bbbe" stroke-width="0.9" stroke-linejoin="round"/>
<path d="M965,572.6 V578.2 M963.3,576.6 L965,578.3 L966.7,576.6" fill="none" stroke="#b9bbbe" stroke-width="0.9"/>
<text x="954.7" y="598.7" font-size="7.4" fill="#b9bbbe" textLength="20.8" lengthAdjust="spacingAndGlyphs">Flatten</text>
<rect x="999.3" y="573.5" width="10.9" height="10.6" rx="1.3" fill="none" stroke="#55595f" stroke-width="1.2"/>
<circle cx="1004.75" cy="578.8" r="3.3" fill="none" stroke="#55595f" stroke-width="0.9" stroke-dasharray="1.2,1.4"/>
<text x="992" y="598.7" font-size="7.4" fill="#3a3f45" stroke="#3a3f45" stroke-width="0.14" textLength="25" lengthAdjust="spacingAndGlyphs">Contour</text></svg></body></html>
